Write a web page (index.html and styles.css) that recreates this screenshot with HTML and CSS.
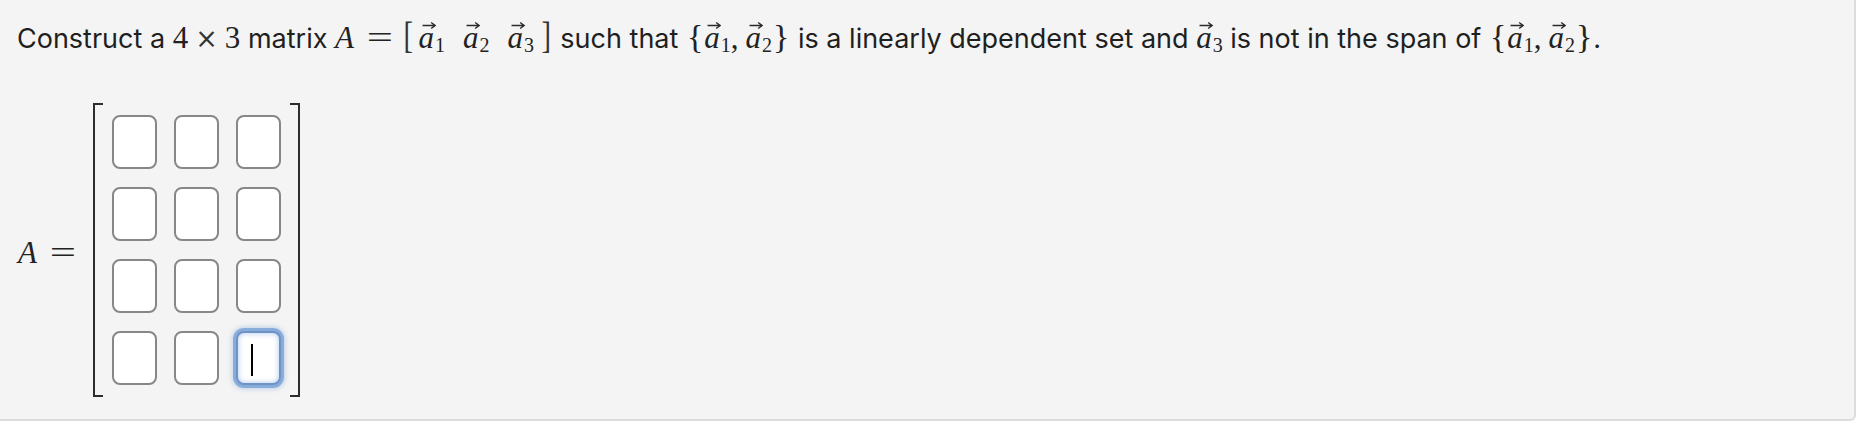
FILE: index.html
```html
<!DOCTYPE html>
<html lang="en">
<head>
<meta charset="utf-8">
<title>Matrix question</title>
<link rel="stylesheet" href="styles.css">
</head>
<body>
<div class="panel">
  <p class="question">Construct a <span class="m">4<span class="bin">×</span>3</span> matrix <span class="m"><i>A</i><span class="rel"><span class="eq">=</span></span><span class="br">[</span><span class="vec">a<svg class="arrow" viewBox="0 0 13 8"><path d="M0.5 4H12 M8.5 1.2L12.2 4L8.5 6.8"/></svg></span><sub>1</sub><span class="vsp"></span><span class="vec">a<svg class="arrow" viewBox="0 0 13 8"><path d="M0.5 4H12 M8.5 1.2L12.2 4L8.5 6.8"/></svg></span><sub>2</sub><span class="vsp"></span><span class="vec">a<svg class="arrow" viewBox="0 0 13 8"><path d="M0.5 4H12 M8.5 1.2L12.2 4L8.5 6.8"/></svg></span><sub>3</sub><span class="br end">]</span></span> such that <span class="m"><span class="brace">{</span><span class="vec">a<svg class="arrow" viewBox="0 0 13 8"><path d="M0.5 4H12 M8.5 1.2L12.2 4L8.5 6.8"/></svg></span><sub>1</sub><span class="comma">,</span><span class="vec">a<svg class="arrow" viewBox="0 0 13 8"><path d="M0.5 4H12 M8.5 1.2L12.2 4L8.5 6.8"/></svg></span><sub>2</sub><span class="brace">}</span></span> is a linearly dependent set and <span class="m"><span class="vec">a<svg class="arrow" viewBox="0 0 13 8"><path d="M0.5 4H12 M8.5 1.2L12.2 4L8.5 6.8"/></svg></span><sub>3</sub></span> is not in the span of <span class="m"><span class="brace">{</span><span class="vec">a<svg class="arrow" viewBox="0 0 13 8"><path d="M0.5 4H12 M8.5 1.2L12.2 4L8.5 6.8"/></svg></span><sub>1</sub><span class="comma">,</span><span class="vec">a<svg class="arrow" viewBox="0 0 13 8"><path d="M0.5 4H12 M8.5 1.2L12.2 4L8.5 6.8"/></svg></span><sub>2</sub><span class="brace">}</span></span>.</p>

  <div class="answer">
    <span class="label m"><i>A</i><span class="rel"><span class="eq">=</span></span></span>
    <div class="matrix">
      <div class="bracket left"></div>
      <div class="grid">
        <div class="cell"></div><div class="cell"></div><div class="cell"></div>
        <div class="cell"></div><div class="cell"></div><div class="cell"></div>
        <div class="cell"></div><div class="cell"></div><div class="cell"></div>
        <div class="cell"></div><div class="cell"></div><div class="cell focus"><span class="caret"></span></div>
      </div>
      <div class="bracket right"></div>
    </div>
  </div>
</div>
</body>
</html>
```

FILE: styles.css
```css
html, body {
  margin: 0;
  padding: 0;
  background: #ffffff;
}

.panel {
  width: 1856px;
  height: 421px;
  box-sizing: border-box;
  background: #f4f4f4;
  border-right: 2px solid #dcdcdc;
  border-bottom: 2px solid #dcdcdc;
  border-bottom-right-radius: 6px;
  padding: 20px 0 0 17px;
  font-family: Inter, "Noto Sans", sans-serif;
  font-size: 27px;
  color: #1f1f1f;
}

.question {
  margin: 0;
  line-height: 36px;
  white-space: nowrap;
}

.m {
  font-family: "Liberation Serif", "Times New Roman", serif;
  font-size: 31px;
  line-height: 36px;
  color: #222;
}

.m i {
  font-style: italic;
}

.bin {
  display: inline-block;
  font-family: "DejaVu Serif", "Liberation Serif", serif;
  font-size: 27px;
  line-height: 30px;
  margin: 0 7px;
  color: #333;
}

.rel {
  display: inline-block;
  width: 25px;
  text-align: center;
  margin: 0 10px 0 13px;
}

.eq {
  display: inline-block;
  transform: scaleX(1.5);
}

.br {
  display: inline-block;
  font-size: 38px;
  line-height: 30px;
  transform: scaleX(0.75);
  margin: 0 4px 0 0;
  color: #333;
}

.br.end {
  margin: 0 0 0 6px;
}

.brace {
  display: inline-block;
  font-size: 34px;
  line-height: 30px;
  margin: 0 1px;
}

.vec {
  position: relative;
  display: inline-block;
  font-style: italic;
  line-height: 36px;
}

.arrow {
  position: absolute;
  left: 3px;
  top: 1px;
  width: 14px;
  height: 9px;
  fill: none;
  stroke: #2a2a2a;
  stroke-width: 1.3;
}

.m sub {
  font-size: 20px;
  line-height: 0;
  vertical-align: -4px;
  margin-left: 1px;
}

.vsp {
  display: inline-block;
  width: 18px;
}

.comma {
  margin-right: 7px;
}

.answer {
  display: flex;
  align-items: center;
  margin-top: 46px;
  margin-left: 1px;
}

.label {
  padding-top: 6px;
  margin-right: 18px;
}

.label .rel {
  margin-right: 0;
}

.matrix {
  display: flex;
  align-items: stretch;
  height: 294px;
}

.bracket {
  width: 8px;
  border-top: 2.5px solid #2b2d31;
  border-bottom: 2.5px solid #2b2d31;
}

.bracket.left {
  border-left: 2.5px solid #2b2d31;
}

.bracket.right {
  border-right: 2.5px solid #2b2d31;
}

.grid {
  display: grid;
  grid-template-columns: repeat(3, 45px);
  grid-auto-rows: 54px;
  column-gap: 17px;
  row-gap: 18px;
  padding: 11.5px 9px 7.5px 9px;
}

.cell {
  box-sizing: border-box;
  background: #ffffff;
  border: 2px solid #878787;
  border-radius: 8px;
}

.cell.focus {
  border-color: #6f93c4;
  box-shadow: 0 0 0 3px rgba(125, 165, 215, 0.85), 0 0 5px 4px rgba(125, 165, 215, 0.45), inset 0 0 5px 1px rgba(150, 185, 230, 0.6);
  display: flex;
  align-items: center;
  padding: 4px 0 0 13px;
}

.caret {
  display: block;
  width: 2px;
  height: 32px;
  background: #000;
}
```
